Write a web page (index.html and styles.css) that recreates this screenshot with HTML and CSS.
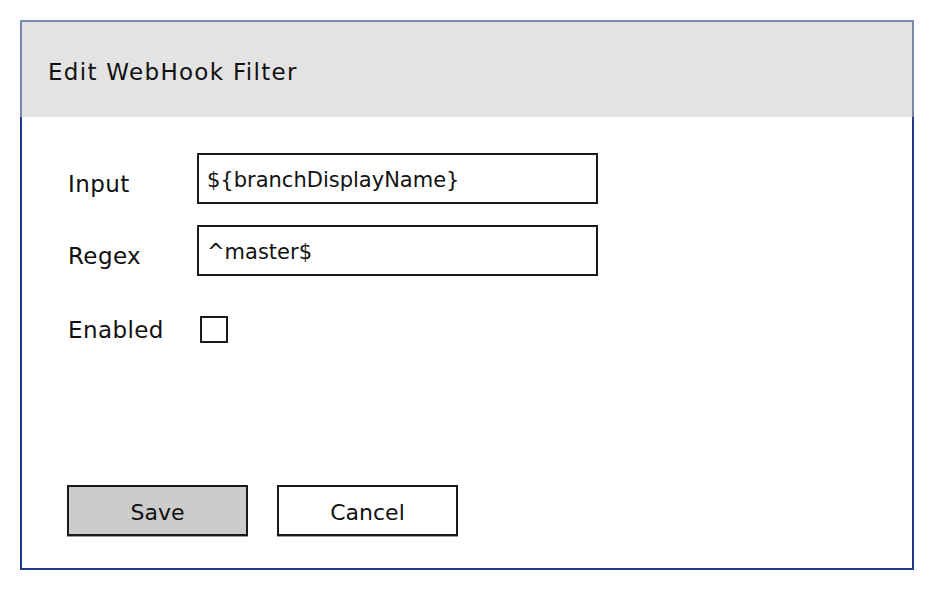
FILE: index.html
```html
<!DOCTYPE html>
<html>
<head>
<meta charset="utf-8">
<link rel="stylesheet" href="styles.css">
</head>
<body>
<div class="dialog">
  <div class="dialog-header">Edit WebHook Filter</div>
  <div class="dialog-body">
    <div class="field">
      <div class="label">Input</div>
      <div class="text-input">${branchDisplayName}</div>
    </div>
    <div class="field">
      <div class="label">Regex</div>
      <div class="text-input">^master$</div>
    </div>
    <div class="field field-check">
      <div class="label label-check">Enabled</div>
      <div class="checkbox"></div>
    </div>
    <div class="actions">
      <div class="btn btn-primary">Save</div>
      <div class="btn">Cancel</div>
    </div>
  </div>
</div>
</body>
</html>
```
FILE: styles.css
```css
html, body {
  margin: 0;
  padding: 0;
  background: #ffffff;
}
body {
  font-family: "DejaVu Sans", "Liberation Sans", sans-serif;
  color: #111111;
  padding: 20px;
}
.dialog {
  box-sizing: border-box;
  width: 894px;
  height: 550px;
  border: 2px solid #23398a;
  display: flex;
  flex-direction: column;
}
.dialog-header {
  box-sizing: border-box;
  margin: -2px -2px 0 -2px;
  height: 97px;
  border: 2px solid #7b88ad;
  border-bottom: none;
  background: #e3e3e3;
  font-size: 23px;
  letter-spacing: 1.3px;
  padding: 5px 0 0 26px;
  display: flex;
  align-items: center;
}
.dialog-body {
  flex: 1;
  display: flex;
  flex-direction: column;
  padding: 36px 0 32px 46px;
}
.field {
  display: flex;
  align-items: center;
  margin-bottom: 21px;
}
.label {
  width: 129px;
  font-size: 23px;
  letter-spacing: 0.4px;
  padding-top: 10px;
}
.label-check {
  padding-top: 0;
}
.text-input {
  box-sizing: border-box;
  width: 401px;
  height: 51px;
  border: 2px solid #1a1a1a;
  padding: 2px 8px 0;
  display: flex;
  align-items: center;
  font-size: 21px;
}
.field-check {
  margin-top: 19px;
}
.checkbox {
  box-sizing: border-box;
  width: 28px;
  height: 27px;
  margin-left: 3px;
  border: 2px solid #1a1a1a;
}
.actions {
  margin-top: auto;
  margin-left: -1px;
  display: flex;
  gap: 29px;
}
.btn {
  box-sizing: border-box;
  width: 181px;
  height: 51px;
  border: 2px solid #1a1a1a;
  background: #ffffff;
  box-shadow: 0 1px 0 #9a9a9a;
  display: flex;
  align-items: center;
  justify-content: center;
  padding-top: 3px;
  font-size: 22px;
}
.btn-primary {
  background: #cccccc;
}
```
